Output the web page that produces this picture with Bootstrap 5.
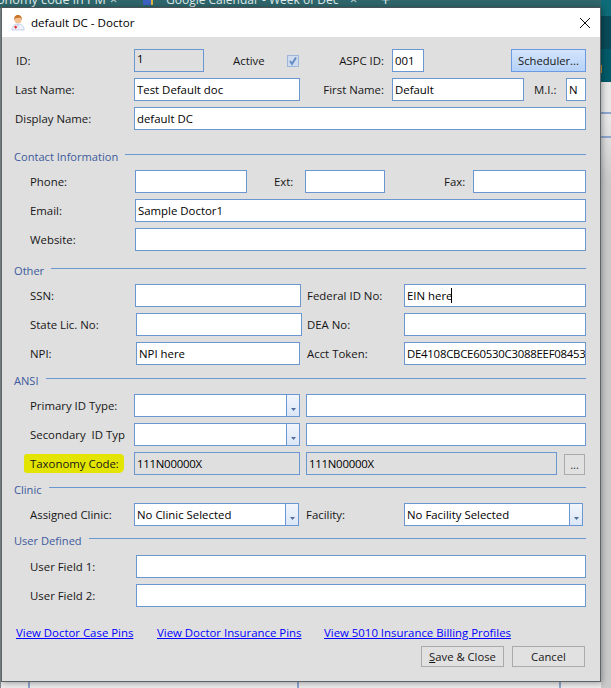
<!DOCTYPE html>
<html lang="en">
<head>
<meta charset="utf-8">
<title>default DC - Doctor</title>
<link rel="stylesheet" href="https://cdn.jsdelivr.net/npm/bootstrap@5.3.0/dist/css/bootstrap.min.css">
<style>
html,body{margin:0;padding:0;background:#e9e9e9;}
body{font-family:"Open Sans","Noto Sans",sans-serif;font-size:11.4px;line-height:15px;color:#161616;width:611px;height:688px;overflow:hidden;}
.desk{position:relative;width:611px;height:688px;overflow:hidden;background:#ececec;}
.topstrip{position:absolute;left:0;top:0;width:611px;height:8px;background:#2f666b;color:#dfe9ea;font-size:12.5px;overflow:hidden;white-space:nowrap;}
.topstrip span{position:absolute;top:-8px;line-height:16px;}
.ts1{left:-3px;font-size:12.6px}.ts2{left:110px}.ts3{left:166px;font-size:12px}.ts4{left:350px}.ts5{left:381px;font-size:16px}
.tsicon{position:absolute;left:143px;top:0;width:10px;height:5px;background:#3d62c4;border-right:2px solid #e0b53c;}
.sidestrip{position:absolute;left:601px;top:0;width:10px;height:688px;background:linear-gradient(#e6e6e6 0,#e6e6e6 120px,#c9c9c9 180px,#c9c9c9 100%);}
.band1{height:23px;background:#2f666b;}
.band2{height:8px;background:#0e6c78;}
.band3{height:33px;background:#0a4a58;}
.band4{height:33px;background:#005a68;position:relative;}
.band4 i{position:absolute;left:0;top:16px;width:1px;height:8px;background:#c48a2c;}
.sline{height:2px;background:#8ea6cf;}
.sp1{height:30px}.sp2{height:22px}
.leftstrip{position:absolute;left:0;top:8px;width:1px;height:680px;background:#7f8a8e;}
.botlines{position:absolute;left:0;top:682px;width:611px;height:6px;}
.botlines i{position:absolute;top:0;width:2px;height:6px;background:#8da6cf;}
.b1{left:28px}.b2{left:297px}.b3{left:559px}
.dlg{position:relative;margin:7px 0 0 1px;width:600px;height:675px;background:#dfdfdf;border:1px solid #5e6468;border-top-color:#4a5154;box-shadow:1px 1px 6px rgba(0,0,0,.35);}
.ttl{height:29px;background:#fff;color:#000;font-size:11.6px;padding-left:9px;}
.ttl svg.av{margin-right:6px;flex:none;}
.xbtn{margin-right:10px;flex:none;}
.pane{padding:12px 14px 0 12px;}
.frow{height:23px;margin-bottom:6px;}
.ind{padding-left:16px;}
.lb{flex:none;white-space:nowrap;}
.fld.form-control{flex:none;height:23px;min-height:0;padding:0 0 1px 2px;border:1px solid #6a96d2;border-radius:0;background:#fff;font-size:11.4px;line-height:20px;color:#000;box-shadow:none;}
.fld.grow{flex:1 1 0;width:auto;min-width:0;}
.fld.ro,.fld.form-control:disabled{background:#dfdfdf;opacity:1;}
.fld.caps.form-control{letter-spacing:-.25px;}
.fld.id{padding-bottom:4px;}
.drop{flex:none;height:23px;border:1px solid #6a96d2;background:#fff;}
.drop .fld.form-control{border:0;height:21px;padding-left:2px;width:100%;flex:1 1 0;min-width:0;background:transparent;}
.dropbtn.btn{flex:none;width:13px;height:21px;padding:0;border:0;border-left:1px solid #6a96d2;border-radius:0;background:linear-gradient(#f2f6fc,#dbe6f6);}
.dropbtn svg{display:block;margin:8px auto 0;}
.sec{height:16px;margin-bottom:5px;color:#3d5a9c;font-size:11.1px;line-height:16px;}
.sec .rule{flex:1 1 0;height:1px;margin:5px 0 0 7px;background:#6a96d2;}
.sec.s1{margin-top:19px}.sec.s2{margin-top:12px}.sec.s3{margin-top:8px}.sec.s4{margin-top:7px}.sec.s5{margin-top:7px;margin-bottom:6px}
.chk.form-check-input{flex:none;width:12px;height:12px;margin:0;border:1px solid #9cb6da;border-radius:0;opacity:1;background-color:#cfdcef;background-size:10px 10px;background-image:url("data:image/svg+xml,%3Csvg xmlns='http://www.w3.org/2000/svg' viewBox='0 0 10 10'%3E%3Cpath d='M2 5l2 3 4-6.500' fill='none' stroke='%23668cc4' stroke-width='2'/%3E%3C/svg%3E");}
.schedbtn.btn{flex:none;width:75px;height:23px;padding:0;margin-left:auto;border:1px solid #6a9ae2;border-radius:0;background:linear-gradient(#d3e4fc,#b6d2f8);color:#161616;font-size:11.2px;line-height:20px;}
.morebtn.btn{flex:none;width:21px;height:21px;margin:1px 0 0 7px;padding:0;border:1px solid #ababab;border-radius:0;background:#e1e1e1;color:#333;font-size:11px;line-height:19px;}
.hl{display:inline-block;background:#e3e500;margin-left:-6px;padding:2px 5px 2px 6px;border-radius:3px 4px 5px 3px;line-height:15px;}
.caretwrap{position:relative;flex:none;}
.caretwrap .fld.form-control{width:100%;}
.caretbar{position:absolute;left:47px;top:4px;width:1px;height:15px;background:#000;}
.linksrow{height:15px;margin-top:18px;padding-left:2px;}
.linksrow a{color:#0000ff;text-decoration:underline;white-space:nowrap;}
.lk1{width:141px}.lk2{width:167px}
.foot{margin-top:6px;height:21px;padding-right:1px;}
.footbtn.btn{height:21px;padding:0;border:1px solid #ababab;border-radius:0;background:#e1e1e1;color:#161616;font-size:11.25px;line-height:19px;}
.fsave{width:83px;margin-right:8px}.fcancel{width:73px}
.w42{width:42px}.w58{width:58px}.w83{width:83px}.w88{width:88px}.w92{width:92px}.w93{width:93px}.w102{width:102px}.w103{width:103px}.w104{width:104px}.w105{width:105px}.w106{width:106px}.w120{width:120px}.w165{width:165px}.w166{width:166px}.w179{width:179px}.w182{width:182px}
.fw20{width:20px!important}.fw32{width:32px!important}.fw70{width:70px!important}.fw80{width:80px!important}.fw112{width:112px!important}.fw113{width:113px!important}.fw132{width:132px!important}.fw164{width:164px!important}.fw166{width:166px!important}.fw182{width:182px!important}.fw251{width:251px!important}
.pl1x{padding-left:1px}.pl2x{padding-left:2px}.pl5x{padding-left:5px}.pl6x{padding-left:6px}.pl7x{padding-left:7px}.pl10x{padding-left:10px}.pl27x{padding-left:27px}.pl29x{padding-left:29px}.pl59x{padding-left:59px}
.gap6{margin-left:6px}.pr8x{padding-right:8px}
</style>
</head>
<body>
<div class="desk">
  <div class="topstrip">
    <span class="ts1">onomy code in PM</span><span class="ts2">×</span><i class="tsicon"></i>
    <span class="ts3">Google Calendar - Week of Dec</span><span class="ts4">×</span><span class="ts5">+</span>
  </div>
  <div class="leftstrip"></div>
  <div class="sidestrip">
    <div class="band2 band1"></div><div class="band2"></div><div class="band3"></div><div class="band4"><i></i></div>
    <div class="sp1"></div><div class="sline"></div><div class="sp2"></div><div class="sline"></div>
  </div>
  <div class="botlines"><i class="b1"></i><i class="b2"></i><i class="b3"></i></div>

  <div class="dlg">
    <div class="ttl d-flex align-items-center">
      <svg class="av" width="14" height="17" viewBox="0 0 15 18">
        <path d="M1 17c0-4 2.500-6.500 6.500-6.500S14 13 14 17z" fill="#eef2fb" stroke="#b5c3e0" stroke-width=".8"/>
        <path d="M5.500 10.500l2 3 2-3z" fill="#c9d6ee"/>
        <circle cx="7.500" cy="6" r="3.800" fill="#f3c08e"/>
        <path d="M3.500 6.500C3 2.500 5 1 7.500 1s4.500 1.500 4 5.500c-.6-2-1.500-2.500-2.500-2.800-1.500.6-3 .6-4 .4-.8.600-1.200 1.300-1.500 2.400z" fill="#c9742a"/>
        <path d="M3.500 14h3M5 12.500v3" stroke="#e0202a" stroke-width="1.200"/>
      </svg>
      <span class="flex-grow-1">default DC - Doctor</span>
      <svg class="xbtn" width="10" height="10" viewBox="0 0 10 10"><path d="M0 0l10 10M10 0L0 10" stroke="#111" stroke-width="1"/></svg>
    </div>
    <div class="pane">
      <div class="frow d-flex align-items-center">
        <label class="lb w120 pl2x">ID:</label>
        <input class="fld id form-control ro fw70" value="1" disabled>
        <label class="lb w83 pl29x">Active</label>
        <input class="chk form-check-input" type="checkbox" checked disabled aria-label="Active">
        <label class="lb w93 text-end pr8x">ASPC ID:</label>
        <input class="fld form-control fw32" value="001">
        <button class="schedbtn btn" type="button">Scheduler...</button>
      </div>
      <div class="frow d-flex align-items-center">
        <label class="lb w120 pl1x">Last Name:</label>
        <input class="fld form-control fw166" value="Test Default doc">
        <label class="lb w92 text-end pr8x">First Name:</label>
        <input class="fld form-control fw132" value="Default">
        <label class="lb w42 pl10x">M.I.:</label>
        <input class="fld form-control fw20" value="N">
      </div>
      <div class="frow d-flex align-items-center">
        <label class="lb w120 pl1x">Display Name:</label>
        <input class="fld form-control grow" value="default DC">
      </div>

      <div class="sec s1 d-flex"><span>Contact Information</span><div class="rule"></div></div>
      <div class="frow ind d-flex align-items-center">
        <label class="lb w105">Phone:</label>
        <input class="fld form-control fw112" value="">
        <label class="lb w58 pl27x">Ext:</label>
        <input class="fld form-control fw80" value="">
        <label class="lb w88 pl59x">Fax:</label>
        <input class="fld form-control fw113" value="">
      </div>
      <div class="frow ind d-flex align-items-center">
        <label class="lb w105">Email:</label>
        <input class="fld form-control grow" value="Sample Doctor1">
      </div>
      <div class="frow ind d-flex align-items-center">
        <label class="lb w105">Website:</label>
        <input class="fld form-control grow" value="">
      </div>

      <div class="sec s2 d-flex"><span>Other</span><div class="rule"></div></div>
      <div class="frow ind d-flex align-items-center">
        <label class="lb w105">SSN:</label>
        <input class="fld form-control fw166" value="">
        <label class="lb w103 pl6x">Federal ID No:</label>
        <div class="caretwrap w182"><input class="fld form-control" value="EIN here"><span class="caretbar"></span></div>
      </div>
      <div class="frow ind d-flex align-items-center">
        <label class="lb w106">State Lic. No:</label>
        <input class="fld form-control fw166" value="">
        <label class="lb w102 pl5x">DEA No:</label>
        <input class="fld form-control fw182" value="">
      </div>
      <div class="frow ind d-flex align-items-center">
        <label class="lb w106">NPI:</label>
        <input class="fld form-control fw164" value="NPI here">
        <label class="lb w104 pl7x">Acct Token:</label>
        <input class="fld caps form-control fw182" value="DE4108CBCE60530C3088EEF08453">
      </div>

      <div class="sec s3 d-flex"><span>ANSI</span><div class="rule"></div></div>
      <div class="frow ind d-flex align-items-center">
        <label class="lb w104">Primary ID Type:</label>
        <div class="drop w166 d-flex"><input class="fld form-control" value=""><button class="dropbtn btn" type="button" aria-label="Open"><svg width="5" height="3" viewBox="0 0 5 3"><path d="M0 0h5L2.500 3z" fill="#4f6e9c"/></svg></button></div>
        <input class="fld form-control grow gap6" value="">
      </div>
      <div class="frow ind d-flex align-items-center">
        <label class="lb w104">Secondary&nbsp; ID Typ</label>
        <div class="drop w166 d-flex"><input class="fld form-control" value=""><button class="dropbtn btn" type="button" aria-label="Open"><svg width="5" height="3" viewBox="0 0 5 3"><path d="M0 0h5L2.500 3z" fill="#4f6e9c"/></svg></button></div>
        <input class="fld form-control grow gap6" value="">
      </div>
      <div class="frow ind d-flex align-items-center">
        <label class="lb w104"><span class="hl">Taxonomy Code:</span></label>
        <input class="fld caps form-control ro fw166" value="111N00000X" disabled>
        <input class="fld caps form-control ro fw251 gap6" value="111N00000X" disabled>
        <button class="morebtn btn" type="button">...</button>
      </div>

      <div class="sec s4 d-flex"><span>Clinic</span><div class="rule"></div></div>
      <div class="frow ind d-flex align-items-center">
        <label class="lb w104">Assigned Clinic:</label>
        <div class="drop w165 d-flex"><input class="fld form-control" value="No Clinic Selected"><button class="dropbtn btn" type="button" aria-label="Open"><svg width="5" height="3" viewBox="0 0 5 3"><path d="M0 0h5L2.500 3z" fill="#4f6e9c"/></svg></button></div>
        <label class="lb w105 pl7x">Facility:</label>
        <div class="drop w179 d-flex"><input class="fld form-control" value="No Facility Selected"><button class="dropbtn btn" type="button" aria-label="Open"><svg width="5" height="3" viewBox="0 0 5 3"><path d="M0 0h5L2.500 3z" fill="#4f6e9c"/></svg></button></div>
      </div>

      <div class="sec s5 d-flex"><span>User Defined</span><div class="rule"></div></div>
      <div class="frow ind d-flex align-items-center">
        <label class="lb w106">User Field 1:</label>
        <input class="fld form-control grow" value="">
      </div>
      <div class="frow ind d-flex align-items-center">
        <label class="lb w106">User Field 2:</label>
        <input class="fld form-control grow" value="">
      </div>

      <div class="linksrow d-flex">
        <div class="lk1"><a href="#">View Doctor Case Pins</a></div>
        <div class="lk2"><a href="#">View Doctor Insurance Pins</a></div>
        <div><a href="#">View 5010 Insurance Billing Profiles</a></div>
      </div>
      <div class="foot d-flex justify-content-end">
        <button class="footbtn fsave btn" type="button"><u>S</u>ave &amp; Close</button>
        <button class="footbtn fcancel btn" type="button">Cancel</button>
      </div>
    </div>
  </div>
</div>
</body>
</html>
